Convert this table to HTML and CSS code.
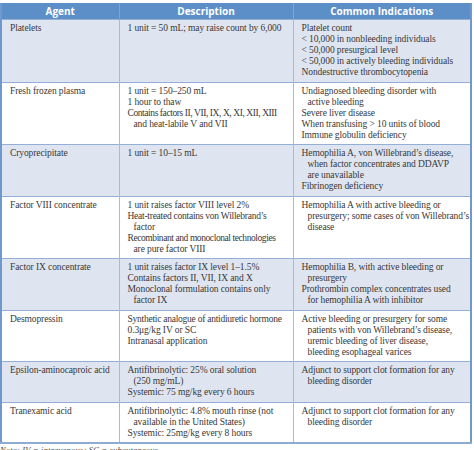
FILE: index.html
```
<!DOCTYPE html>
<html>
<head>
<meta charset="utf-8">
<link rel="stylesheet" href="styles.css">
</head>
<body>
<div class="page">
<table class="agents">
  <colgroup><col class="c1"><col class="c2"><col class="c3"></colgroup>
  <thead>
    <tr><th>Agent</th><th>Description</th><th>Common Indications</th></tr>
  </thead>
  <tbody>
    <tr class="shade">
      <td><div class="ln">Platelets</div></td>
      <td><div class="ln">1 unit = 50 mL; may raise count by 6,000</div></td>
      <td>
        <div class="ln">Platelet count</div>
        <div class="ln">&lt; 10,000 in nonbleeding individuals</div>
        <div class="ln">&lt; 50,000 presurgical level</div>
        <div class="ln">&lt; 50,000 in actively bleeding individuals</div>
        <div class="ln">Nondestructive thrombocytopenia</div>
      </td>
    </tr>
    <tr>
      <td><div class="ln">Fresh frozen plasma</div></td>
      <td>
        <div class="ln">1 unit = 150–250 mL</div>
        <div class="ln">1 hour to thaw</div>
        <div class="ln tight">Contains factors II, VII, IX, X, XI, XII, XIII</div>
        <div class="ln cont">and heat-labile V and VII</div>
      </td>
      <td>
        <div class="ln">Undiagnosed bleeding disorder with</div>
        <div class="ln cont">active bleeding</div>
        <div class="ln">Severe liver disease</div>
        <div class="ln">When transfusing &gt; 10 units of blood</div>
        <div class="ln">Immune globulin deficiency</div>
      </td>
    </tr>
    <tr class="shade">
      <td><div class="ln">Cryoprecipitate</div></td>
      <td><div class="ln">1 unit = 10–15 mL</div></td>
      <td>
        <div class="ln">Hemophilia A, von Willebrand’s disease,</div>
        <div class="ln cont">when factor concentrates and DDAVP</div>
        <div class="ln cont">are unavailable</div>
        <div class="ln">Fibrinogen deficiency</div>
      </td>
    </tr>
    <tr>
      <td><div class="ln">Factor VIII concentrate</div></td>
      <td>
        <div class="ln">1 unit raises factor VIII level 2%</div>
        <div class="ln semi">Heat-treated contains von Willebrand’s</div>
        <div class="ln cont">factor</div>
        <div class="ln tight">Recombinant and monoclonal technologies</div>
        <div class="ln cont">are pure factor VIII</div>
      </td>
      <td>
        <div class="ln">Hemophilia A with active bleeding or</div>
        <div class="ln cont">presurgery; some cases of von Willebrand’s</div>
        <div class="ln cont">disease</div>
      </td>
    </tr>
    <tr class="shade">
      <td><div class="ln">Factor IX concentrate</div></td>
      <td>
        <div class="ln">1 unit raises factor IX level 1–1.5%</div>
        <div class="ln">Contains factors II, VII, IX and X</div>
        <div class="ln">Monoclonal formulation contains only</div>
        <div class="ln cont">factor IX</div>
      </td>
      <td>
        <div class="ln">Hemophilia B, with active bleeding or</div>
        <div class="ln cont">presurgery</div>
        <div class="ln">Prothrombin complex concentrates used</div>
        <div class="ln cont">for hemophilia A with inhibitor</div>
      </td>
    </tr>
    <tr>
      <td><div class="ln">Desmopressin</div></td>
      <td>
        <div class="ln semi">Synthetic analogue of antidiuretic hormone</div>
        <div class="ln">0.3μg/kg IV or SC</div>
        <div class="ln">Intranasal application</div>
      </td>
      <td>
        <div class="ln">Active bleeding or presurgery for some</div>
        <div class="ln cont">patients with von Willebrand’s disease,</div>
        <div class="ln cont">uremic bleeding of liver disease,</div>
        <div class="ln cont">bleeding esophageal varices</div>
      </td>
    </tr>
    <tr class="shade">
      <td><div class="ln">Epsilon-aminocaproic acid</div></td>
      <td>
        <div class="ln">Antifibrinolytic: 25% oral solution</div>
        <div class="ln cont">(250 mg/mL)</div>
        <div class="ln">Systemic: 75 mg/kg every 6 hours</div>
      </td>
      <td>
        <div class="ln">Adjunct to support clot formation for any</div>
        <div class="ln cont">bleeding disorder</div>
      </td>
    </tr>
    <tr>
      <td><div class="ln">Tranexamic acid</div></td>
      <td>
        <div class="ln">Antifibrinolytic: 4.8% mouth rinse (not</div>
        <div class="ln cont">available in the United States)</div>
        <div class="ln">Systemic: 25mg/kg every 8 hours</div>
      </td>
      <td>
        <div class="ln">Adjunct to support clot formation for any</div>
        <div class="ln cont">bleeding disorder</div>
      </td>
    </tr>
  </tbody>
</table>
<p class="note">Note: IV = intravenous; SC = subcutaneous.</p>
</div>
</body>
</html>
```
FILE: styles.css
```
html, body {
  margin: 0;
  padding: 0;
  background: #ffffff;
}
.page {
  padding-top: 3px;
  width: 474px;
}
.agents {
  width: 472px;
  border-collapse: collapse;
  table-layout: fixed;
  font-family: "Liberation Serif", "DejaVu Serif", serif;
  font-size: 9.5px;
  letter-spacing: -0.1px;
  color: #383838;
  border-left: 2px solid #6f98cc;
  border-right: 2px solid #6f98cc;
  border-bottom: 2px solid #8eabd4;
}
.c1 { width: 118px; }
.c2 { width: 174px; }
.c3 { width: 178px; }
.agents th {
  background: #5c8fc8;
  color: #ffffff;
  font-family: "Open Sans", "Liberation Sans", sans-serif;
  font-weight: 700;
  font-size: 10px;
  letter-spacing: 0;
  line-height: 16px;
  padding: 0;
  text-align: center;
  border-left: 1px solid #7fa3d2;
}
.agents th:first-child { border-left: none; }
.agents td {
  vertical-align: top;
  padding: 3px 4px 3.5px 8px;
  border-top: 1px solid #93afd6;
  border-left: 1px solid #a3bbdc;
  line-height: 11px;
}
.agents td:first-child { border-left: none; }
.agents tr.shade td { background: #dfe5f0; }
.ln {
  white-space: nowrap;
}
.ln.cont {
  padding-left: 6px;
}
.ln.tight {
  letter-spacing: -0.42px;
}
.ln.semi {
  letter-spacing: -0.25px;
}
.note {
  margin: 2px 0 0 0;
  font-family: "Liberation Serif", serif;
  font-style: italic;
  font-size: 8.5px;
  letter-spacing: 0.2px;
  line-height: 9px;
  color: #444444;
}
```
